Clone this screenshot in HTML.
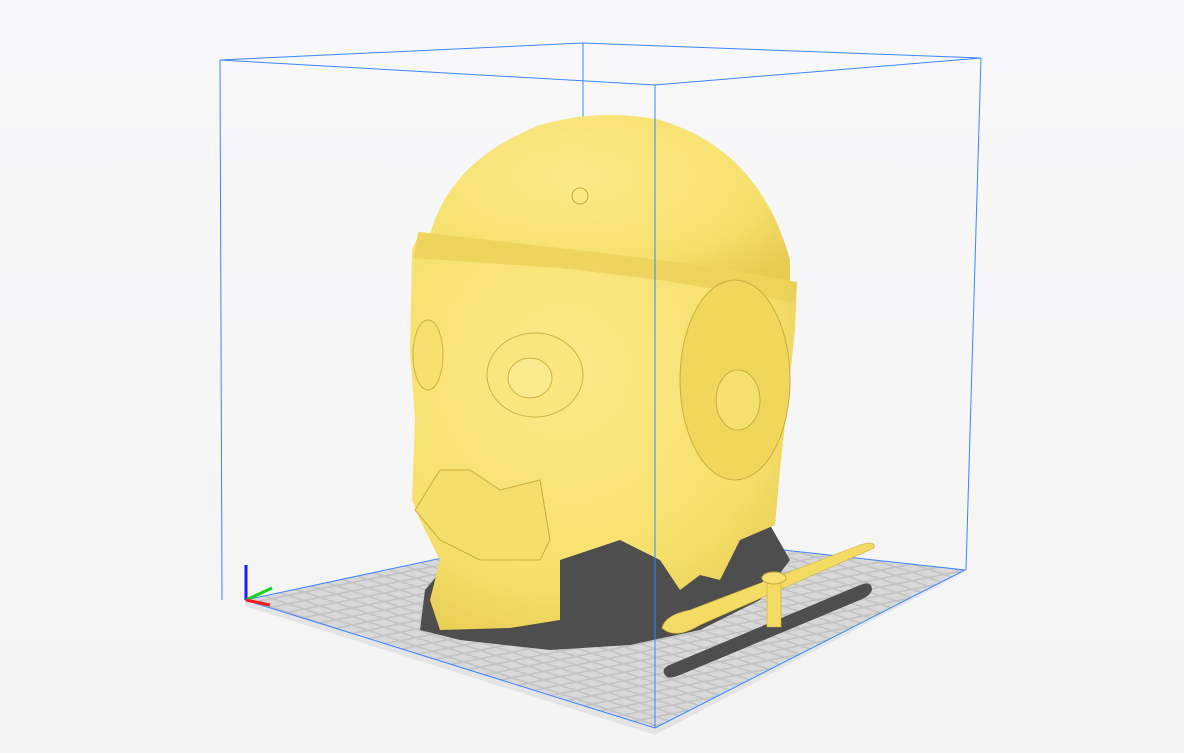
<!DOCTYPE html>
<html><head><meta charset="utf-8"><style>
html,body{margin:0;padding:0;width:1184px;height:753px;overflow:hidden;background:#f7f7f8;}
svg{display:block}
</style></head><body>
<svg width="1184" height="753" viewBox="0 0 1184 753" xmlns="http://www.w3.org/2000/svg">
<defs>
<pattern id="grid" width="16" height="16" patternUnits="userSpaceOnUse" patternTransform="matrix(1,-0.2,1.0,0.33,0,0)">
<rect width="16" height="16" fill="#c2c2c2"/>
<rect x="1.5" y="1.5" width="13" height="13" fill="#d8d8d8"/>
</pattern>
<radialGradient id="y" cx="0.4" cy="0.35" r="0.75">
<stop offset="0" stop-color="#fbea8a"/><stop offset="0.7" stop-color="#f6e06c"/><stop offset="1" stop-color="#e6cc52"/>
</radialGradient>
<linearGradient id="bg" x1="0" y1="0" x2="0" y2="1"><stop offset="0" stop-color="#f8f8fa"/><stop offset="1" stop-color="#f4f4f4"/></linearGradient>
</defs>
<rect width="1184" height="753" fill="url(#bg)"/>
<polygon points="245,600 583,528 965,572 655,735 245,606" fill="#e4e4e4"/>
<polygon points="245,600 583,528 965,570 655,728" fill="url(#grid)"/>
<polyline points="245,600 583,528 965,570 655,728 245,600" fill="none" stroke="#3a86ff" stroke-width="1"/>
<line x1="583" y1="43" x2="583" y2="528" stroke="#3a86ff"/>
<path d="M420,630 L425,590 L450,560 L500,545 L600,520 L700,515 L770,525 L790,560 L760,600 L700,630 L630,645 L550,650 L460,640 Z" fill="#4e4e4e"/>
<path d="M665,675 Q660,668 672,664 L860,585 Q872,580 872,590 Q870,596 860,600 L680,675 Q668,680 665,675Z" fill="#4e4e4e"/>
<g fill="url(#y)">
<path d="M430,235 Q450,160 540,125 Q600,108 660,120 Q760,150 790,260 L790,290 L430,260Z"/>
<path d="M412,250 L420,232 L560,248 L700,265 L797,282 L795,330 L780,470 L775,525 L740,540 L720,580 L700,575 L680,590 L660,560 L620,540 L560,560 L560,620 L510,628 L440,630 L430,600 L440,560 L420,520 L412,500 L415,420 L410,350Z"/>
</g>
<path d="M418,232 L560,248 L700,265 L797,282 L795,302 L660,280 L560,268 L414,258Z" fill="#e9cf55" opacity="0.75"/>
<ellipse cx="735" cy="380" rx="55" ry="100" fill="#f0d75c" stroke="#c9ad3c"/>
<ellipse cx="738" cy="400" rx="22" ry="30" fill="#f6e070" stroke="#c9ad3c"/>
<ellipse cx="535" cy="375" rx="48" ry="42" fill="#f9e67e" stroke="#cdb140"/>
<ellipse cx="530" cy="378" rx="22" ry="20" fill="#fbeb90" stroke="#cdb140"/>
<ellipse cx="428" cy="355" rx="15" ry="35" fill="#f6e070" stroke="#cdb140"/>
<path d="M415,510 L440,470 L470,470 L500,490 L540,480 L550,540 L540,560 L480,560 L440,540Z" fill="#f5de6c" stroke="#c9ad3c"/>
<circle cx="580" cy="196" r="8" fill="none" stroke="#c9ad3c"/>
<path d="M662,628 Q665,615 690,610 L860,545 Q876,540 874,548 L700,625 Q675,640 662,628Z" fill="#f4dc64" stroke="#c9ad3c" stroke-width="0.6"/>
<rect x="767" y="582" width="14" height="45" fill="#f4dc64" stroke="#c9ad3c" stroke-width="0.6"/>
<ellipse cx="774" cy="578" rx="12" ry="6" fill="#f6e070" stroke="#c9ad3c"/>
<polygon points="220,60 583,43 981,58 655,85" fill="none" stroke="#3a86ff"/>
<line x1="220" y1="60" x2="222" y2="600" stroke="#3a86ff"/>
<line x1="981" y1="58" x2="966" y2="570" stroke="#3a86ff"/>
<line x1="655" y1="85" x2="655" y2="728" stroke="#3a86ff"/>
<line x1="246" y1="600" x2="246" y2="565" stroke="#1a1aff" stroke-width="3"/>
<line x1="246" y1="600" x2="272" y2="588" stroke="#19d019" stroke-width="3"/>
<line x1="246" y1="600" x2="270" y2="605" stroke="#ff1a1a" stroke-width="3"/>
</svg>
</body></html>
